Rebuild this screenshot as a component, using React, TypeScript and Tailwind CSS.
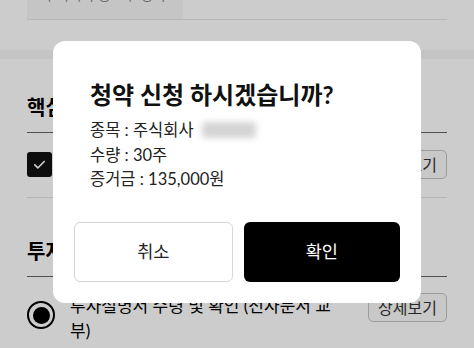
import React from "react";

const font = { fontFamily: "Lato, 'Noto Sans CJK KR', 'Noto Sans', sans-serif" };

function DetailButton({ className = "" }: { className?: string }) {
  return (
    <button
      className={`w-[79px] h-[29px] shrink-0 rounded-[5px] border border-[#c4c4c4] bg-[#fafafa] text-[16px] leading-none text-[#333] ${className}`}
    >
      상세보기
    </button>
  );
}

export default function App() {
  return (
    <div className="relative w-[474px] h-[348px] overflow-hidden bg-white" style={font}>
      {/* background page */}
      <div className="flex flex-col">
        <div className="mx-[27px] h-[20px] flex border-b border-[#e6e6e6]">
          <div className="w-[156px] bg-[#f7f7f7] overflow-hidden">
            <div className="-mt-[15px] pl-[16px] text-[14px] leading-[20px] text-[#888]">주식회사 공모주 청약</div>
          </div>
          <div className="flex-1 bg-white" />
        </div>
        <div className="h-[30px]" />
        <div className="h-[9px] bg-[#f5f5f5]" />

        <div className="px-[27px] flex flex-col">
          <div className="mt-[34px] h-[28px] text-[20px] font-bold leading-[28px] text-black">핵심설명서 확인</div>
          <div className="mt-[11px] h-px bg-[#666]" />
          <div className="mt-[17px] flex items-center justify-between">
            <div className="flex items-center gap-3">
              <div className="w-[25px] h-[25px] rounded-[3px] bg-[#111] flex items-center justify-center">
                <svg width="15" height="15" viewBox="0 0 16 16" fill="none">
                  <path d="M3 8.5l3.2 3.2L13 4.8" stroke="white" strokeWidth="1.8" strokeLinecap="round" strokeLinejoin="round" />
                </svg>
              </div>
              <span className="text-[17px] text-black">핵심설명서 확인 및 동의</span>
            </div>
            <DetailButton />
          </div>
          <div className="mt-[18px] h-px bg-[#e3e3e3]" />

          <div className="mt-[39px] h-[28px] text-[20px] font-bold leading-[28px] text-black">투자설명서 확인</div>
          <div className="mt-[11px] h-px bg-[#666]" />
          <div className="mt-[16px] flex items-start justify-between">
            <div className="flex items-start gap-[15px]">
              <div className="mt-[8px] w-[28px] h-[28px] shrink-0 rounded-full border-[2.5px] border-black flex items-center justify-center">
                <div className="w-[17px] h-[17px] rounded-full bg-black" />
              </div>
              <span className="w-[280px] text-[17px] leading-[25px] text-black">
                투자설명서 수령 및 확인 (전자문서 교부)
              </span>
            </div>
            <DetailButton />
          </div>
        </div>
      </div>

      {/* dim overlay */}
      <div className="absolute inset-0 bg-black/20" />

      {/* modal */}
      <div className="absolute left-[53px] top-[41px] w-[368px] h-[262px] rounded-[12px] bg-white flex flex-col pt-[38px] px-[21px] pb-[21px]">
        <div className="pl-[16px]">
          <div className="text-[24px] font-bold leading-[32px] text-[#111]">청약 신청 하시겠습니까?</div>
          <div className="mt-[7px] text-[16.5px] leading-[24.5px] text-[#222]">
            <div className="flex items-center">
              <span>종목 : 주식회사</span>
              <span className="ml-[8px] inline-block w-[54px] h-[16px] rounded-[4px] bg-[#d4d4d4] blur-[3px]" />
            </div>
            <div>수량 : 30주</div>
            <div>증거금 : 135,000원</div>
          </div>
        </div>
        <div className="mt-auto flex gap-[11px]">
          <button className="flex-1 h-[60px] rounded-[6px] border border-[#d6d6d6] bg-white text-[17.5px] text-[#222]">
            취소
          </button>
          <button className="flex-1 h-[60px] rounded-[6px] bg-black text-[17.5px] text-white">확인</button>
        </div>
      </div>
    </div>
  );
}
